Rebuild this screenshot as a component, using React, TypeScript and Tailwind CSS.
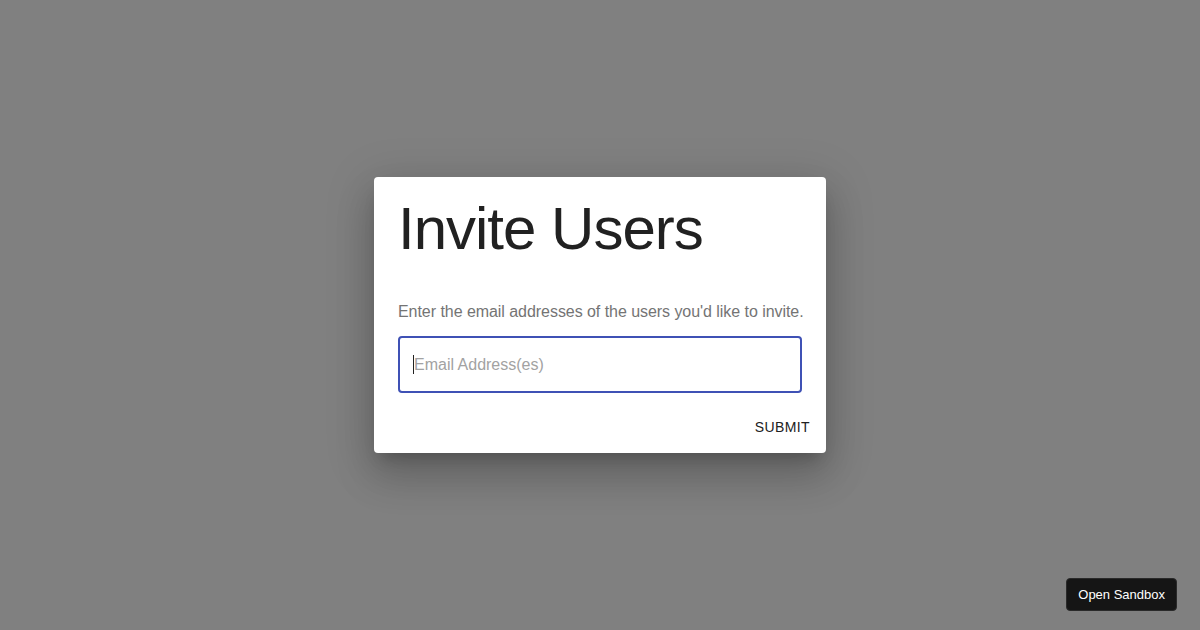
export default function App() {
  return (
    <div className="relative flex h-[630px] w-full items-center justify-center bg-[#808080] font-['Liberation_Sans',Arial,sans-serif]">
      {/* Dialog */}
      <div className="flex w-[452px] flex-col rounded bg-white shadow-[0px_11px_15px_-7px_rgba(0,0,0,0.2),0px_24px_38px_3px_rgba(0,0,0,0.14),0px_9px_46px_8px_rgba(0,0,0,0.12)]">
        <h1 className="px-6 pt-4 text-[60px] leading-[72px] font-normal tracking-[-1px] text-[#212121]">
          Invite Users
        </h1>
        <div className="px-6">
          <p className="mt-[35px] text-base leading-6 tracking-[-0.05px] whitespace-nowrap text-[#747474]">
            Enter the email addresses of the users you'd like to invite.
          </p>
          <div className="mt-3 flex h-[57px] items-center rounded border-2 border-[#3f51b5] px-[13px]">
            <span className="h-[19px] w-px bg-[#212121]" />
            <span className="text-base text-[#a2a2a2]">Email Address(es)</span>
          </div>
        </div>
        <div className="mt-4 flex justify-end pr-2 pb-2">
          <button className="h-9 px-2 text-sm tracking-[0.4px] text-[#212121]">SUBMIT</button>
        </div>
      </div>

      <button className="absolute right-[23px] bottom-[19px] flex h-[33px] items-center rounded border border-[#2a2a2a] bg-[#151515] px-[11px] text-[13px] text-white">
        Open Sandbox
      </button>
    </div>
  )
}
